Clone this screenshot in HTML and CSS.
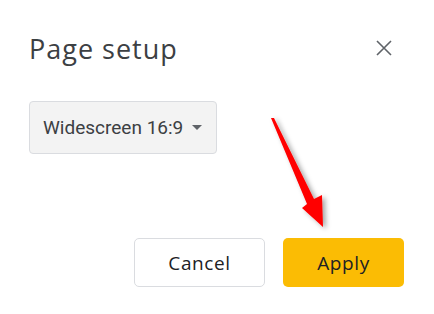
FILE: index.html
```html
<!DOCTYPE html>
<html lang="en">
<head>
    <meta charset="UTF-8">
    <meta name="viewport" content="width=device-width, initial-scale=1.0">
    <title>Page setup</title>
    <link rel="stylesheet" href="styles.css">
</head>
<body>
    <div class="dialog">
        <div class="dialog-header">
            <h1 class="dialog-title">Page setup</h1>
            <button class="close-btn" aria-label="Close">
                <svg width="16" height="16" viewBox="0 0 16 16">
                    <path d="M1 1L15 15M15 1L1 15" stroke="#5f6368" stroke-width="1.6" fill="none"/>
                </svg>
            </button>
        </div>

        <div class="select-box">
            <span class="select-label">Widescreen 16:9</span>
            <span class="select-caret"></span>
        </div>

        <div class="dialog-actions">
            <button class="btn btn-cancel">Cancel</button>
            <button class="btn btn-apply">Apply</button>
        </div>

        <!-- annotation arrow drawn over the dialog -->
        <svg class="pointer-arrow" width="434" height="314" viewBox="0 0 434 314">
            <defs>
                <filter id="shadow" x="-50%" y="-50%" width="200%" height="200%">
                    <feDropShadow dx="3" dy="2" stdDeviation="2.5" flood-color="#000" flood-opacity="0.35"/>
                </filter>
            </defs>
            <polygon points="271,118 307,204 302,208 323,227 322,195 314,199 274,118" fill="#ff0000" filter="url(#shadow)"/>
        </svg>
    </div>
</body>
</html>
```

FILE: styles.css
```css
body {
    margin: 0;
    background: #fff;
    font-family: "Open Sans", Arial, sans-serif;
}
.dialog {
    position: relative;
    width: 434px;
    height: 314px;
    padding: 29px 30px 0 29px;
    box-sizing: border-box;
}
.dialog-header {
    display: flex;
    align-items: center;
    justify-content: space-between;
    height: 38px;
}
.dialog-title {
    margin: 0;
    font-size: 27px;
    font-weight: 400;
    color: #3c4043;
    letter-spacing: 1px;
}
.close-btn {
    background: none;
    border: none;
    padding: 0;
    margin-right: 12px;
    width: 16px;
    height: 16px;
    cursor: pointer;
}
.select-box {
    display: inline-flex;
    align-items: center;
    margin-top: 34px;
    height: 53px;
    padding: 0 14px 0 13px;
    box-sizing: border-box;
    width: 188px;
    background: #f3f3f3;
    border: 1px solid #dadce0;
    border-radius: 4px;
    font-family: Roboto, Arial, sans-serif;
    font-size: 19px;
    color: #3c4043;
}
.select-label {
    flex: 1;
}
.select-caret {
    width: 0;
    height: 0;
    border-left: 5px solid transparent;
    border-right: 5px solid transparent;
    border-top: 5px solid #5f6368;
}
.dialog-actions {
    display: flex;
    justify-content: flex-end;
    gap: 18px;
    margin-top: 84px;
}
.btn {
    height: 49px;
    border-radius: 5px;
    font-family: "Open Sans", Arial, sans-serif;
    font-size: 19px;
    letter-spacing: 0.6px;
    color: #202124;
    cursor: pointer;
}
.btn-cancel {
    width: 131px;
    background: #fff;
    border: 1px solid #dadce0;
}
.btn-apply {
    width: 121px;
    background: #fbbc04;
    border: none;
}
.pointer-arrow {
    position: absolute;
    left: 0;
    top: 0;
    pointer-events: none;
}
```
